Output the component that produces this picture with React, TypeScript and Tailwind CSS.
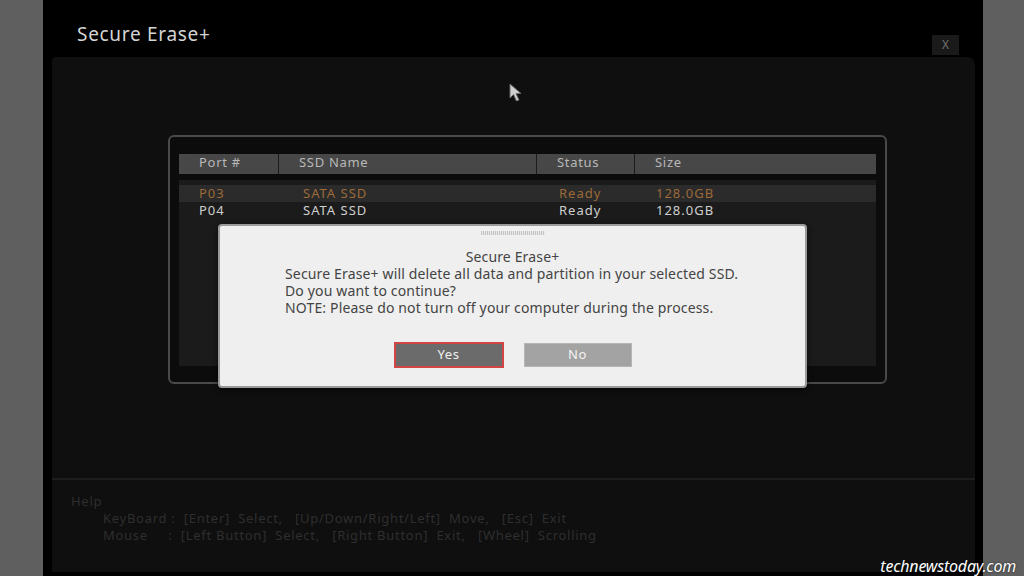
import React from 'react';

const columns = [
  { label: 'Port #', width: 'w-[100px]' },
  { label: 'SSD Name', width: 'w-[258px]' },
  { label: 'Status', width: 'w-[98px]' },
  { label: 'Size', width: 'flex-1' },
];

const drives = [
  { port: 'P03', name: 'SATA SSD', status: 'Ready', size: '128.0GB', selected: true },
  { port: 'P04', name: 'SATA SSD', status: 'Ready', size: '128.0GB', selected: false },
];

const Cursor = () => (
  <svg width="16" height="20" viewBox="0 0 16 20" className="absolute left-[457px] top-[26px]">
    <path
      d="M1 1 L1 15 L4.5 11.5 L7.5 18 L10 17 L7 10.5 L12 10.5 Z"
      fill="#cfcfcf"
      stroke="#6a6a6a"
      strokeWidth="1"
      strokeLinejoin="round"
    />
  </svg>
);

const DriveTable = () => (
  <div className="ml-[116px] mt-[78px] w-[719px] h-[249px] rounded-md border-2 border-[#4a4a4a] bg-[#0c0c0c] px-[9px] pt-[17px]">
    <div className="flex h-[20px] bg-[#474747] text-[13px] tracking-[0.7px] text-[#b8b8b8] leading-[17px]">
      {columns.map((col, i) => (
        <div
          key={col.label}
          className={`${col.width} pl-[20px] ${i < columns.length - 1 ? 'border-r border-[#1c1c1c]' : ''}`}
        >
          {col.label}
        </div>
      ))}
    </div>
    <div className="mt-[6px] h-[186px] bg-[#1b1b1b] pt-[5px] text-[13px] tracking-[1px] leading-[17px]">
      {drives.map((d) => (
        <div
          key={d.port}
          className={`flex ${d.selected ? 'bg-[#2b2b2b] text-[#9c6a38]' : 'text-[#cfcfcf]'}`}
        >
          <div className="w-[100px] pl-[20px]">{d.port}</div>
          <div className="w-[258px] pl-[24px]">{d.name}</div>
          <div className="w-[98px] pl-[22px]">{d.status}</div>
          <div className="flex-1 pl-[21px]">{d.size}</div>
        </div>
      ))}
    </div>
  </div>
);

const ConfirmDialog = () => (
  <div className="absolute left-[166px] top-[167px] w-[589px] h-[164px] rounded-[4px] bg-[#efefef] border-2 border-[#9a9a9a] shadow-[0_2px_6px_rgba(0,0,0,0.6)]">
    <div className="mx-auto mt-[5px] h-[4px] w-[64px] bg-[repeating-linear-gradient(90deg,#c4c4c4_0_1px,#e8e8e8_1px_2px)]" />
    <div className="mt-[13px] text-center text-[14px] leading-[17px] tracking-[0.15px] text-[#444]">Secure Erase+</div>
    <div className="pl-[65px] text-[14px] leading-[17px] tracking-[0.15px] text-[#444]">
      <div>Secure Erase+ will delete all data and partition in your selected SSD.</div>
      <div>Do you want to continue?</div>
      <div>NOTE: Please do not turn off your computer during the process.</div>
    </div>
    <div className="mt-[26px] flex justify-center gap-[20px]">
      <button className="h-[26px] w-[110px] border-2 border-[#d24545] bg-[#6b6b6b] text-[13px] tracking-[0.6px] text-[#f0f0f0]">
        Yes
      </button>
      <button className="mt-[1px] h-[24px] w-[108px] border border-[#b5b5b5] bg-[#a3a3a3] text-[13px] tracking-[0.6px] text-[#f4f4f4]">
        No
      </button>
    </div>
  </div>
);

export default function App() {
  return (
    <div className="flex h-[576px] w-[1024px] bg-[#5f5f5f] font-['Noto_Sans',sans-serif] overflow-hidden">
      <div className="w-[43px]" />
      <div className="relative flex w-[940px] flex-col bg-black">
        <div className="flex h-[57px] items-start justify-between">
          <div className="pl-[34px] pt-[20px] text-[19px] leading-[28px] tracking-[0.7px] text-[#d4d4d4]">Secure Erase+</div>
          <div className="mr-[24px] mt-[35px] flex h-[20px] w-[27px] items-center justify-center bg-[#1a1a1a] text-[12px] text-[#707070]">
            X
          </div>
        </div>
        <div className="relative ml-[9px] mr-[8px] mb-[4px] flex flex-1 flex-col rounded-tr-lg rounded-tl-sm bg-[#0f0f0f]">
          <div className="relative h-[421px]">
            <Cursor />
            <DriveTable />
            <ConfirmDialog />
          </div>
          <div className="flex-1 border-t-2 border-[#1d1d1d] pl-[19px] pt-[13px] text-[13px] leading-[17px] tracking-[0.72px] text-[#2e2e2e] whitespace-pre">
            <div>Help</div>
            <div className="pl-[32px]">KeyBoard :  [Enter]  Select,   [Up/Down/Right/Left]  Move,   [Esc]  Exit</div>
            <div className="pl-[32px]">Mouse     :  [Left Button]  Select,   [Right Button]  Exit,   [Wheel]  Scrolling</div>
          </div>
        </div>
      </div>
      <div className="flex-1" />
      <div className="absolute right-[8px] top-[554px] text-[16px] italic tracking-[-0.2px] text-white font-['Noto_Sans',sans-serif] [text-shadow:0_0_2px_rgba(0,0,0,0.8)]">
        technewstoday.com
      </div>
    </div>
  );
}
